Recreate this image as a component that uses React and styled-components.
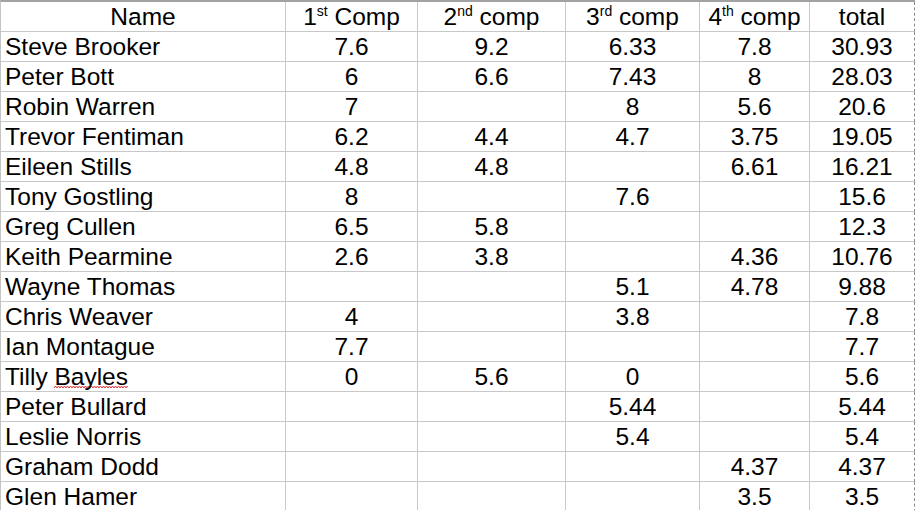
import React from "react"
import styled, { createGlobalStyle } from "styled-components"

//Global
const GlobalStyle = createGlobalStyle`
  html, body {
    margin: 0;
    padding: 0;
    background: #ffffff;
    overflow: hidden;
  }
  body {
    font-family: "Liberation Sans", Arial, sans-serif;
    color: #000000;
  }
`

//Spell check squiggle
const wave = encodeURIComponent(
  "<svg xmlns='http://www.w3.org/2000/svg' width='6' height='4'><path d='M0 3 L1.5 1 L3 3 L4.5 1 L6 3' fill='none' stroke='#e03030' stroke-width='1'/></svg>"
)

//Styled Components
const Sheet = styled.div`
  display: grid;
  grid-template-columns: 285px 132px 148px 134px 110px 105px;
  grid-auto-rows: 30px;
  width: max-content;
  border-top: 2px solid #a2a2a2;
  border-left: 1px solid #c4c4c4;
  font-size: 24.5px;
`

const Cell = styled.div`
  box-sizing: border-box;
  height: 30px;
  border-bottom: 1px solid #c8c8c8;
  border-right: ${p => (p.$last ? "1px dashed #8a8a8a" : "1px solid #c8c8c8")};
  padding: ${p => (p.$left ? "0 0 0 4px" : "0")};
  text-align: ${p => (p.$left ? "left" : "center")};
  line-height: 29px;
  white-space: nowrap;
  overflow: hidden;
`

const Sup = styled.sup`
  font-size: 14px;
  vertical-align: 9px;
  line-height: 0;
`

const Misspelt = styled.span`
  background-image: url("data:image/svg+xml,${wave}");
  background-repeat: repeat-x;
  background-size: 6px 4px;
  background-position: 0 calc(100% - 1px);
`

const players = [
  ["Steve Brooker", "7.6", "9.2", "6.33", "7.8", "30.93"],
  ["Peter Bott", "6", "6.6", "7.43", "8", "28.03"],
  ["Robin Warren", "7", "", "8", "5.6", "20.6"],
  ["Trevor Fentiman", "6.2", "4.4", "4.7", "3.75", "19.05"],
  ["Eileen Stills", "4.8", "4.8", "", "6.61", "16.21"],
  ["Tony Gostling", "8", "", "7.6", "", "15.6"],
  ["Greg Cullen", "6.5", "5.8", "", "", "12.3"],
  ["Keith Pearmine", "2.6", "3.8", "", "4.36", "10.76"],
  ["Wayne Thomas", "", "", "5.1", "4.78", "9.88"],
  ["Chris Weaver", "4", "", "3.8", "", "7.8"],
  ["Ian Montague", "7.7", "", "", "", "7.7"],
  ["Tilly Bayles", "0", "5.6", "0", "", "5.6"],
  ["Peter Bullard", "", "", "5.44", "", "5.44"],
  ["Leslie Norris", "", "", "5.4", "", "5.4"],
  ["Graham Dodd", "", "", "", "4.37", "4.37"],
  ["Glen Hamer", "", "", "", "3.5", "3.5"],
]

const renderName = name =>
  name === "Tilly Bayles" ? (
    <>
      Tilly <Misspelt>Bayles</Misspelt>
    </>
  ) : (
    name
  )

const App = () => {
  return (
    <>
      <GlobalStyle />
      <Sheet>
        <Cell>Name</Cell>
        <Cell>
          1<Sup>st</Sup> Comp
        </Cell>
        <Cell>
          2<Sup>nd</Sup> comp
        </Cell>
        <Cell>
          3<Sup>rd</Sup> comp
        </Cell>
        <Cell>
          4<Sup>th</Sup> comp
        </Cell>
        <Cell $last>total</Cell>
        {players.map(row =>
          row.map((value, i) => (
            <Cell key={row[0] + i} $left={i === 0} $last={i === 5}>
              {i === 0 ? renderName(value) : value}
            </Cell>
          ))
        )}
      </Sheet>
    </>
  )
}

export default App
